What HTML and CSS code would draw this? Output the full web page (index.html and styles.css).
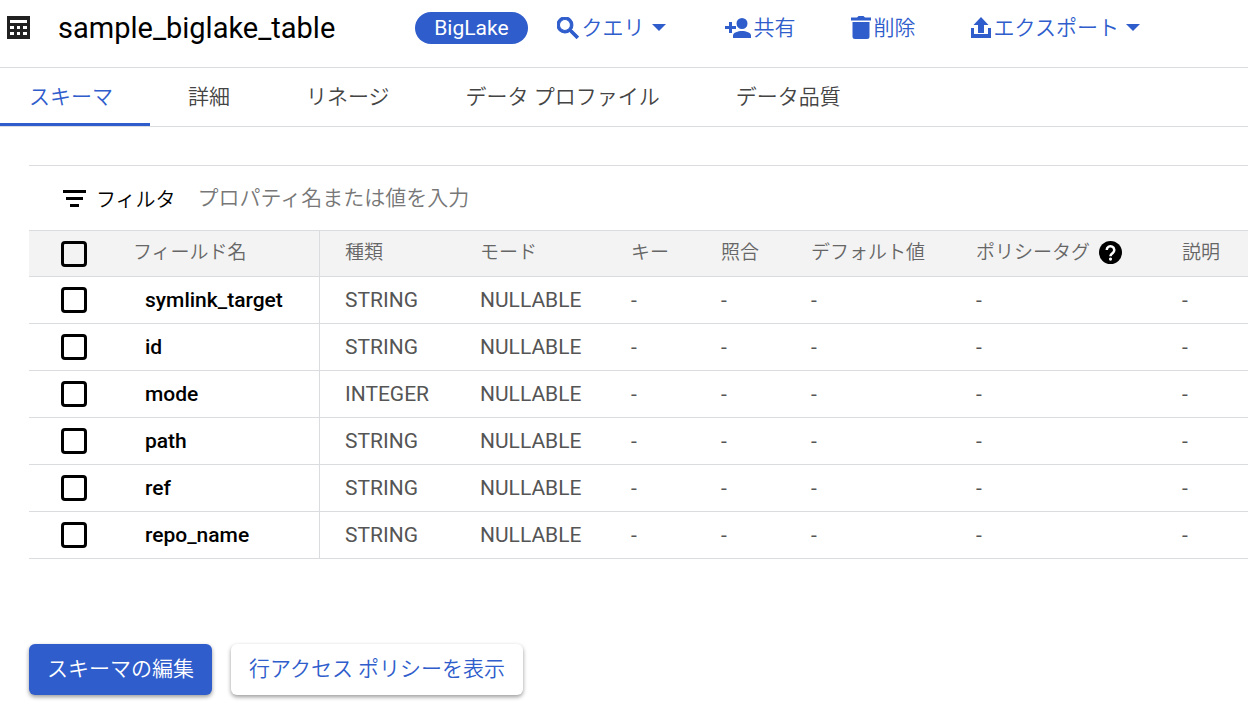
FILE: index.html
```html
<!DOCTYPE html>
<html lang="ja">
<head>
    <meta charset="UTF-8">
    <meta name="viewport" content="width=device-width, initial-scale=1.0">
    <title>sample_biglake_table</title>
    <link rel="stylesheet" href="styles.css">
</head>
<body>

<header class="header">
    <svg class="table-icon" viewBox="0 0 23 23" width="23" height="23" aria-hidden="true">
        <path fill="#212121" fill-rule="evenodd" d="M0 0h23v23H0zM3 4v3h17V4zM3 10v3h4v-3zM10 10v3h3v-3zM16 10v3h4v-3zM3 16v3h4v-3zM10 16v3h3v-3zM16 16v3h4v-3z"/>
    </svg>
    <h1>sample_biglake_table</h1>
    <span class="badge">BigLake</span>
    <div class="toolbar">
        <button class="tool" type="button">
            <svg viewBox="3 3 18 18" width="22" height="22" aria-hidden="true"><path stroke="currentColor" stroke-width=".9" d="M15.500 14h-.790l-.280-.270A6.470 6.470 0 0 0 16 9.500 6.500 6.500 0 1 0 9.500 16c1.610 0 3.090-.590 4.230-1.570l.270.280v.790l5 4.990L20.490 19zm-6 0C7.010 14 5 11.990 5 9.500S7.010 5 9.500 5 14 7.010 14 9.500 11.990 14 9.500 14z"/></svg>
            <span>クエリ</span>
            <svg class="caret" viewBox="0 0 14 7" width="14" height="7" aria-hidden="true"><path d="M0 0h14L7 7z"/></svg>
        </button>
        <button class="tool" type="button">
            <svg viewBox="0 0 26 20" width="26" height="20" aria-hidden="true"><path d="M17 11a5.500 5.500 0 1 0 0-11 5.500 5.500 0 0 0 0 11zM4 4h3v4h4v3H7v4H4v-4H0V8h4zM17 13c-4 0-9 1.500-9 4.500V20h18v-2.500c0-3-5-4.500-9-4.500z"/></svg>
            <span>共有</span>
        </button>
        <button class="tool" type="button">
            <svg viewBox="0 0 20 23" width="20" height="23" aria-hidden="true"><path d="M0 1.500h6L7.500 0h5L14 1.500h6V4.500H0zM1.500 6h17v14.500A2.500 2.500 0 0 1 16 23H4a2.500 2.500 0 0 1-2.500-2.500z"/></svg>
            <span>削除</span>
        </button>
        <button class="tool" type="button">
            <svg viewBox="0 0 20 21" width="20" height="21" aria-hidden="true"><path d="M10 0l7.500 8H13v8H7V8H2.500zM0 11h3v6h14v-6h3v10H0z"/></svg>
            <span>エクスポート</span>
            <svg class="caret" viewBox="0 0 14 7" width="14" height="7" aria-hidden="true"><path d="M0 0h14L7 7z"/></svg>
        </button>
    </div>
</header>

<nav class="tabs">
    <a class="tab active" href="#schema">スキーマ</a>
    <a class="tab" href="#details">詳細</a>
    <a class="tab" href="#lineage">リネージ</a>
    <a class="tab" href="#profile">データ プロファイル</a>
    <a class="tab" href="#quality">データ品質</a>
</nav>

<main class="content" id="schema">
    <div class="filter">
        <svg viewBox="0 0 23 17" width="23" height="17" aria-hidden="true"><path d="M0 0h23v3H0zM3 7h17v3H3zM7 14h9v3H7z"/></svg>
        <label for="filterInput">フィルタ</label>
        <input type="text" id="filterInput" placeholder="プロパティ名または値を入力">
    </div>

    <table class="schema">
        <colgroup>
            <col class="col-check">
            <col class="col-name">
            <col class="col-type">
            <col class="col-mode">
            <col class="col-key">
            <col class="col-key">
            <col class="col-default">
            <col class="col-policy">
            <col>
        </colgroup>
        <thead>
            <tr>
                <th class="check"><input type="checkbox" aria-label="すべて選択"></th>
                <th class="name">フィールド名</th>
                <th>種類</th>
                <th>モード</th>
                <th>キー</th>
                <th>照合</th>
                <th>デフォルト値</th>
                <th>
                    <span class="policy">ポリシータグ
                        <svg viewBox="0 0 22 22" width="23" height="23" aria-hidden="true"><circle cx="11" cy="11" r="11"/><path fill="none" stroke="#fff" stroke-width="2.400" d="M7.400 8.600a3.600 3.600 0 1 1 5.800 2.800c-1.300 1-2.200 1.500-2.200 3.200"/><circle cx="11" cy="17.300" r="1.500" fill="#fff"/></svg>
                    </span>
                </th>
                <th>説明</th>
            </tr>
        </thead>
        <tbody>
            <tr>
                <td class="check"><input type="checkbox" aria-label="symlink_target"></td>
                <td class="name">symlink_target</td>
                <td>STRING</td><td>NULLABLE</td><td>-</td><td>-</td><td>-</td><td>-</td><td>-</td>
            </tr>
            <tr>
                <td class="check"><input type="checkbox" aria-label="id"></td>
                <td class="name">id</td>
                <td>STRING</td><td>NULLABLE</td><td>-</td><td>-</td><td>-</td><td>-</td><td>-</td>
            </tr>
            <tr>
                <td class="check"><input type="checkbox" aria-label="mode"></td>
                <td class="name">mode</td>
                <td>INTEGER</td><td>NULLABLE</td><td>-</td><td>-</td><td>-</td><td>-</td><td>-</td>
            </tr>
            <tr>
                <td class="check"><input type="checkbox" aria-label="path"></td>
                <td class="name">path</td>
                <td>STRING</td><td>NULLABLE</td><td>-</td><td>-</td><td>-</td><td>-</td><td>-</td>
            </tr>
            <tr>
                <td class="check"><input type="checkbox" aria-label="ref"></td>
                <td class="name">ref</td>
                <td>STRING</td><td>NULLABLE</td><td>-</td><td>-</td><td>-</td><td>-</td><td>-</td>
            </tr>
            <tr>
                <td class="check"><input type="checkbox" aria-label="repo_name"></td>
                <td class="name">repo_name</td>
                <td>STRING</td><td>NULLABLE</td><td>-</td><td>-</td><td>-</td><td>-</td><td>-</td>
            </tr>
        </tbody>
    </table>

    <div class="actions">
        <button class="button primary" type="button">スキーマの編集</button>
        <button class="button" type="button">行アクセス ポリシーを表示</button>
    </div>
</main>

</body>
</html>
```
FILE: styles.css
```css
* {
    box-sizing: border-box;
}
body {
    margin: 0;
    background-color: #fff;
    font-family: Roboto, 'Noto Sans CJK JP', sans-serif;
    font-size: 21px;
    font-weight: 350;
    color: #000;
}
button, input {
    font: inherit;
}
svg {
    flex: none;
    fill: currentColor;
}

/* title bar */
.header {
    display: flex;
    align-items: center;
    height: 68px;
    padding: 0 7px 12px;
    border-bottom: 1px solid #dadce0;
    white-space: nowrap;
}
.header h1 {
    margin: 0 80px 0 28px;
    font-size: 29px;
    font-weight: 400;
}
.badge {
    padding: 0 19px;
    border-radius: 16px;
    background-color: #2f5dcc;
    color: #fff;
    font-weight: 400;
    line-height: 32px;
}
.toolbar {
    display: flex;
    gap: 55px;
    margin-left: 29px;
}
.tool {
    display: flex;
    align-items: center;
    gap: 3px;
    padding: 0;
    border: none;
    background: none;
    color: #2f5dcc;
    line-height: 32px;
    cursor: pointer;
}
.caret {
    margin: 0 4px;
}

/* tabs */
.tabs {
    display: flex;
    border-bottom: 1px solid #dadce0;
    white-space: nowrap;
}
.tab {
    padding: 4px 38px 0;
    border-bottom: 3px solid transparent;
    color: #444;
    line-height: 51px;
    text-decoration: none;
}
.tab:first-child {
    padding-left: 29px;
    padding-right: 37px;
}
.tab.active {
    border-color: #2f5dcc;
    color: #2f5dcc;
}

.content {
    margin: 38px 0 0 29px;
    padding-bottom: 16px;
}
.filter {
    display: flex;
    align-items: center;
    height: 65px;
    padding-left: 34px;
    border-top: 1px solid #dadce0;
}
.filter label {
    margin: 0 22px 0 10px;
    font-size: 20px;
}
.filter input {
    flex: 1;
    min-width: 0;
    padding: 0;
    border: none;
    outline: none;
}
.filter input::placeholder {
    color: #777;
}

/* schema table */
.schema {
    width: 100%;
    table-layout: fixed;
    border-collapse: separate;
    border-spacing: 0;
    border-top: 1px solid #dadce0;
}
.col-check { width: 104px; }
.col-name { width: 187px; }
.col-type { width: 135px; }
.col-mode { width: 151px; }
.col-key { width: 90px; }
.col-default { width: 165px; }
.col-policy { width: 206px; }

.schema th,
.schema td {
    height: 47px;
    padding: 0 0 0 25px;
    border-bottom: 1px solid #dadce0;
    color: #555;
    font-weight: 400;
    text-align: left;
    white-space: nowrap;
}
.schema th {
    height: 46px;
    background-color: #f3f3f3;
    color: #666;
    font-size: 19px;
    font-weight: 350;
    line-height: 24px;
    padding-bottom: 2px;
}
.schema .check {
    padding-left: 32px;
    padding-bottom: 0;
}
.schema .name {
    border-right: 1px solid #dadce0;
}
.schema th.name {
    padding-left: 0;
}
.schema td.name {
    padding-left: 12px;
    color: #000;
    font-weight: 500;
}
.schema input {
    display: block;
    appearance: none;
    width: 26px;
    height: 26px;
    margin: 0;
    border: 3px solid #000;
    border-radius: 4px;
}
.schema input:checked {
    background-color: #2f5dcc;
}
.policy {
    display: flex;
    align-items: center;
    gap: 9px;
}
.policy svg {
    fill: #000;
}

/* bottom buttons */
.actions {
    display: flex;
    gap: 19px;
    margin-top: 85px;
}
.button {
    padding: 0 18px;
    border: none;
    border-radius: 6px;
    background-color: #fff;
    color: #2f5dcc;
    line-height: 51px;
    box-shadow: 0 2px 4px rgba(0, 0, 0, 0.4);
    cursor: pointer;
}
.button.primary {
    background-color: #2f5dcc;
    color: #fff;
}
```
